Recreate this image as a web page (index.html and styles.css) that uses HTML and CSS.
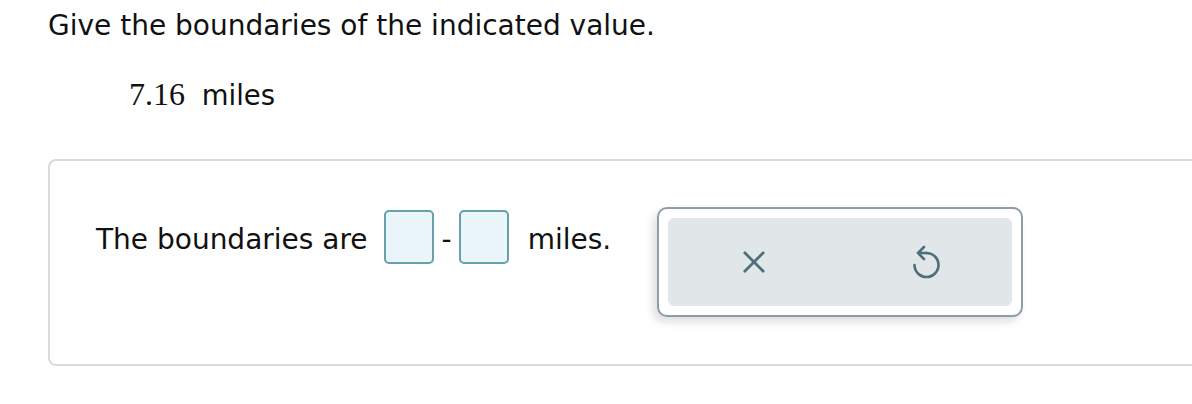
FILE: index.html
```html
<!DOCTYPE html>
<html lang="en">

<head>
  <meta charset="UTF-8">
  <meta name="viewport" content="width=device-width, initial-scale=1.0">
  <title>Boundaries</title>
  <link rel="stylesheet" href="styles.css">
</head>

<body>
  <div class="page">
    <p class="question">Give the boundaries of the indicated value.</p>

    <div class="value">
      <span class="num">7.16</span> <span class="unit">miles</span>
    </div>

    <div class="answer-box">
      <div class="prompt">
        <span class="text">The boundaries are</span>
        <input type="text" class="blank" aria-label="lower boundary">
        <span class="text dash">-</span>
        <input type="text" class="blank" aria-label="upper boundary">
        <span class="text after">miles.</span>
      </div>

      <div class="panel">
        <div class="panel-inner">
          <button class="tool" aria-label="Clear">
            <svg width="24" height="24" viewBox="0 0 24 24">
              <path d="M2 2 L22 22 M22 2 L2 22" stroke="#4d6f7a" stroke-width="2.8" fill="none" />
            </svg>
          </button>
          <button class="tool" aria-label="Undo">
            <svg width="30" height="36" viewBox="0 0 30 36">
              <path d="M15.5 9 A12 12 0 1 1 3.5 21" stroke="#4d6f7a" stroke-width="2.6" fill="none" stroke-linecap="round" />
              <path d="M13 3 L7 9 L13 15 M7 9 L15.5 9" stroke="#4d6f7a" stroke-width="2.6" fill="none" stroke-linecap="round" stroke-linejoin="round" />
            </svg>
          </button>
        </div>
      </div>
    </div>
  </div>
</body>

</html>
```

FILE: styles.css
```css
/* page */

body {
  margin: 0;
  overflow: hidden;
  font-family: "DejaVu Sans", Verdana, sans-serif;
  color: #111;
  background-color: #fff;
}

.page {
  padding: 9px 0 0 48px;
}

.question {
  margin: 0;
  font-size: 28px;
  line-height: 34px;
}

.value {
  height: 38px;
  margin-top: 33px;
  padding-left: 81px;
  font-size: 27.5px;
  line-height: 36px;
}

.value .num {
  font-family: "Liberation Serif", "Times New Roman", serif;
  font-size: 32px;
}

.value .unit {
  margin-left: 8px;
}

/* answer area */

.answer-box {
  box-sizing: border-box;
  width: 1200px;
  height: 207px;
  margin-top: 45px;
  padding: 46px 0 0 46px;
  border: 2px solid #d7dbde;
  border-radius: 8px;
  display: flex;
  align-items: flex-start;
}

.prompt {
  display: flex;
  align-items: flex-start;
}

.prompt .text {
  margin-top: 16px;
  font-size: 28px;
  line-height: 34px;
}

.prompt .dash {
  margin-left: 8px;
  margin-right: 7px;
}

.prompt .after {
  margin-left: 19px;
}

.blank {
  box-sizing: border-box;
  width: 50px;
  height: 54px;
  margin: 3px 0 0 16px;
  padding: 0;
  border: 2px solid #67a0af;
  border-radius: 5px;
  background-color: #eaf5f9;
}

.dash + .blank {
  margin-left: 0;
}

.panel {
  box-sizing: border-box;
  width: 366px;
  height: 110px;
  margin-left: 46px;
  padding: 9px;
  border: 2px solid #8d9fa6;
  border-radius: 10px;
  background-color: #fff;
  box-shadow: -4px 5px 9px rgba(0, 0, 0, 0.13);
}

.panel-inner {
  display: flex;
  height: 100%;
  border-radius: 6px;
  background-color: #e1e6e9;
}

.tool {
  flex: 1;
  display: flex;
  justify-content: center;
  align-items: center;
  padding: 0;
  border: none;
  background: none;
  cursor: pointer;
}
```
